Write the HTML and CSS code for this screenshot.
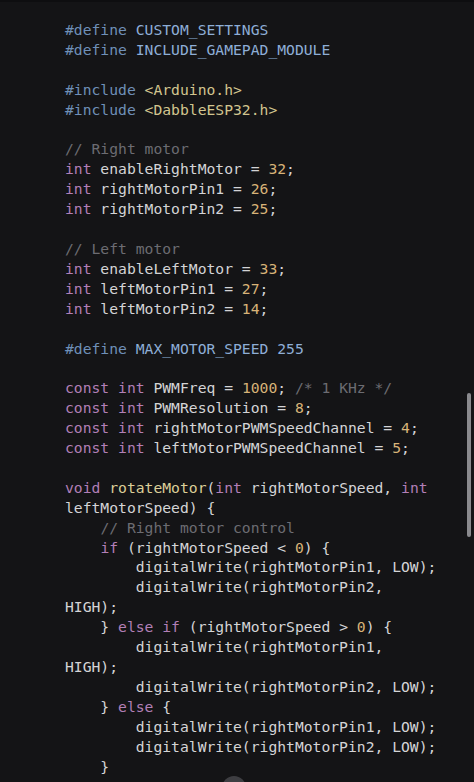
FILE: index.html
```html
<!DOCTYPE html>
<html>
<head>
<meta charset="utf-8">
<link rel="stylesheet" href="styles.css">
</head>
<body>
<div class="screen">
<pre class="code"><span class="pp">#define</span> <span class="mac">CUSTOM_SETTINGS</span>
<span class="pp">#define</span> <span class="mac">INCLUDE_GAMEPAD_MODULE</span>

<span class="pp">#include</span> <span class="str">&lt;Arduino.h&gt;</span>
<span class="pp">#include</span> <span class="str">&lt;DabbleESP32.h&gt;</span>

<span class="cm">// Right motor</span>
<span class="kw">int</span> enableRightMotor = <span class="num">32</span>;
<span class="kw">int</span> rightMotorPin1 = <span class="num">26</span>;
<span class="kw">int</span> rightMotorPin2 = <span class="num">25</span>;

<span class="cm">// Left motor</span>
<span class="kw">int</span> enableLeftMotor = <span class="num">33</span>;
<span class="kw">int</span> leftMotorPin1 = <span class="num">27</span>;
<span class="kw">int</span> leftMotorPin2 = <span class="num">14</span>;

<span class="pp">#define</span> <span class="mac">MAX_MOTOR_SPEED 255</span>

<span class="kw">const</span> <span class="kw">int</span> PWMFreq = <span class="num">1000</span>; <span class="cm">/* 1 KHz */</span>
<span class="kw">const</span> <span class="kw">int</span> PWMResolution = <span class="num">8</span>;
<span class="kw">const</span> <span class="kw">int</span> rightMotorPWMSpeedChannel = <span class="num">4</span>;
<span class="kw">const</span> <span class="kw">int</span> leftMotorPWMSpeedChannel = <span class="num">5</span>;

<span class="kw">void</span> <span class="fn">rotateMotor</span>(<span class="kw">int</span> rightMotorSpeed, <span class="kw">int</span>
leftMotorSpeed) {
    <span class="cm">// Right motor control</span>
    <span class="kw">if</span> (rightMotorSpeed &lt; <span class="num">0</span>) {
        digitalWrite(rightMotorPin1, LOW);
        digitalWrite(rightMotorPin2,
HIGH);
    } <span class="kw">else</span> <span class="kw">if</span> (rightMotorSpeed &gt; <span class="num">0</span>) {
        digitalWrite(rightMotorPin1,
HIGH);
        digitalWrite(rightMotorPin2, LOW);
    } <span class="kw">else</span> {
        digitalWrite(rightMotorPin1, LOW);
        digitalWrite(rightMotorPin2, LOW);
    }</pre>
<div class="scrollbar"></div>
<div class="home-dot"></div>
</div>
</body>
</html>
```
FILE: styles.css
```css
html, body {
  margin: 0;
  padding: 0;
  background: #141416;
}
.screen {
  position: relative;
  width: 474px;
  height: 782px;
  overflow: hidden;
  background: #141416;
  border-top: 2px solid #0e0e10;
  box-sizing: border-box;
}
.code {
  margin: 0;
  padding: 18px 0 0 65px;
  font-family: "DejaVu Sans Mono", "Liberation Mono", monospace;
  font-size: 14.7px;
  line-height: 19.9px;
  color: #d4d4d6;
  white-space: pre;
}
.pp { color: #6f90b8; }
.mac { color: #8eaed6; }
.str { color: #d2c58f; }
.cm { color: #6c6c72; }
.kw { color: #b27fb6; }
.num { color: #d8b378; }
.fn { color: #dccf98; }
.scrollbar {
  position: absolute;
  left: 467px;
  top: 391px;
  width: 4px;
  height: 144px;
  border-radius: 2px;
  background: #8a8a8e;
}
.home-dot {
  position: absolute;
  left: 222px;
  top: 774px;
  width: 24px;
  height: 24px;
  border-radius: 50%;
  background: #3e3e42;
}
```
